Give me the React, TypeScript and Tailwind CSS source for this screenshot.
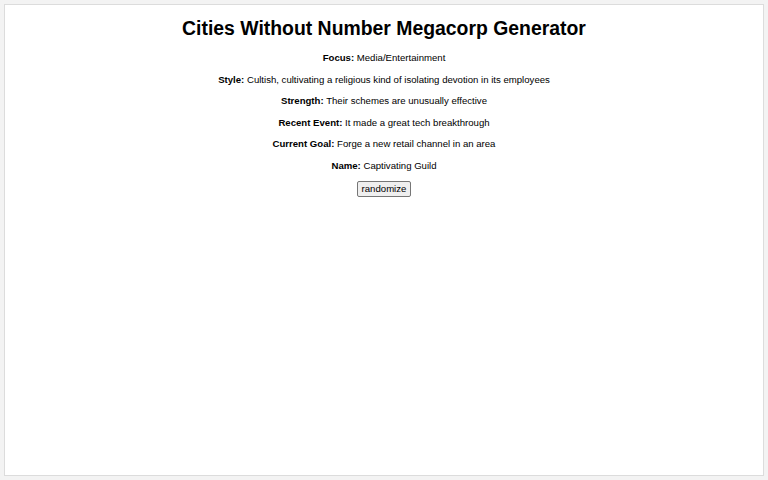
const corp = [
  { label: "Focus", value: "Media/Entertainment" },
  { label: "Style", value: "Cultish, cultivating a religious kind of isolating devotion in its employees" },
  { label: "Strength", value: "Their schemes are unusually effective" },
  { label: "Recent Event", value: "It made a great tech breakthrough" },
  { label: "Current Goal", value: "Forge a new retail channel in an area" },
  { label: "Name", value: "Captivating Guild" },
];

export default function App() {
  return (
    <div
      className="min-h-screen bg-[#f3f3f3] p-1 text-black"
      style={{ fontFamily: '"Liberation Sans", Arial, sans-serif' }}
    >
      <div className="h-[472px] border border-[#dcdcdc] bg-white text-center text-[9.6px]">
        <h1 className="mt-[12px] mb-[12px] text-[19.4px] font-bold leading-[23px]">
          Cities Without Number Megacorp Generator
        </h1>
        {corp.map((row) => (
          <p key={row.label} className="my-[10px] leading-[11.6px]">
            <b>{row.label}:</b> {row.value}
          </p>
        ))}
        <div className="-mt-px">
          <button className="rounded-[2px] border border-[#767676] bg-[#efefef] px-[4px] py-[1px] leading-[12px]">
            randomize
          </button>
        </div>
      </div>
    </div>
  );
}
